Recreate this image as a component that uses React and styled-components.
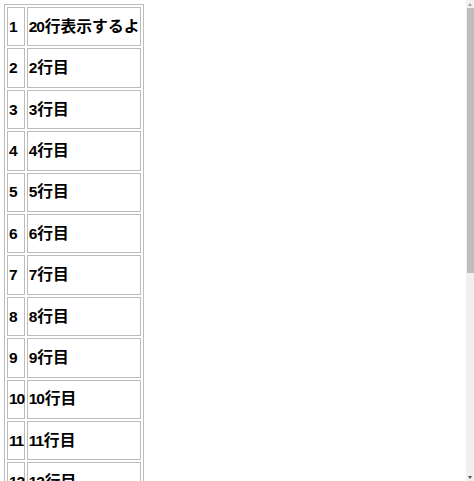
import React from 'react';
import styled, { createGlobalStyle } from 'styled-components';

const GlobalStyle = createGlobalStyle`
  body {
    margin: 4px;
    background: #ffffff;
    font-family: "Noto Sans CJK JP", "Liberation Sans", sans-serif;
  }
`;

const Table = styled.table`
  border: 1px solid #bcbcbc;
  border-spacing: 2px;
`;

const Cell = styled.td`
  border: 1px solid #bcbcbc;
  padding: ${(p) => (p.$num ? '0 0 0 1px' : '0 1px')};
  height: 37.4px;
  font-size: 15.8px;
  font-weight: bold;
  line-height: 1.2;
  color: #000;
  white-space: nowrap;
  vertical-align: middle;
`;

const Num = styled.span`
  font-family: "Liberation Sans", sans-serif;
  font-size: 15.5px;
  letter-spacing: -1.2px;
  margin-right: ${(p) => (p.$gap ? '1px' : '0')};
`;

// page scrollbar as drawn in the screenshot (overlay on the right edge)
const ScrollBar = styled.div`
  position: fixed;
  top: 0;
  right: 0;
  width: 8px;
  height: 100vh;
  background: #f0f0f0;
  display: flex;
  flex-direction: column;
  align-items: center;
`;

const Arrow = styled.div`
  height: 8px;
  flex: none;
  display: flex;
  align-items: center;
  justify-content: center;
  &::before {
    content: '';
    border-left: 2.5px solid transparent;
    border-right: 2.5px solid transparent;
    ${(p) => (p.$down
      ? 'border-top: 3px solid #505050;'
      : 'border-bottom: 3px solid #a3a3a3;')}
  }
`;

const Thumb = styled.div`
  width: 7px;
  height: 265px;
  background: #bdbdbd;
`;

const Track = styled.div`
  flex: 1;
`;

const rows = Array.from({ length: 20 }, (_, i) => ({
  no: i + 1,
  head: String(i === 0 ? 20 : i + 1),
  tail: i === 0 ? '行表示するよ' : '行目',
}));

export default function App() {
  return (
    <>
      <GlobalStyle />
      <Table>
        <tbody>
          {rows.map((row) => (
            <tr key={row.no}>
              <Cell $num><Num>{row.no}</Num></Cell>
              <Cell><Num $gap>{row.head}</Num>{row.tail}</Cell>
            </tr>
          ))}
        </tbody>
      </Table>
      <ScrollBar>
        <Arrow />
        <Thumb />
        <Track />
        <Arrow $down />
      </ScrollBar>
    </>
  );
}
